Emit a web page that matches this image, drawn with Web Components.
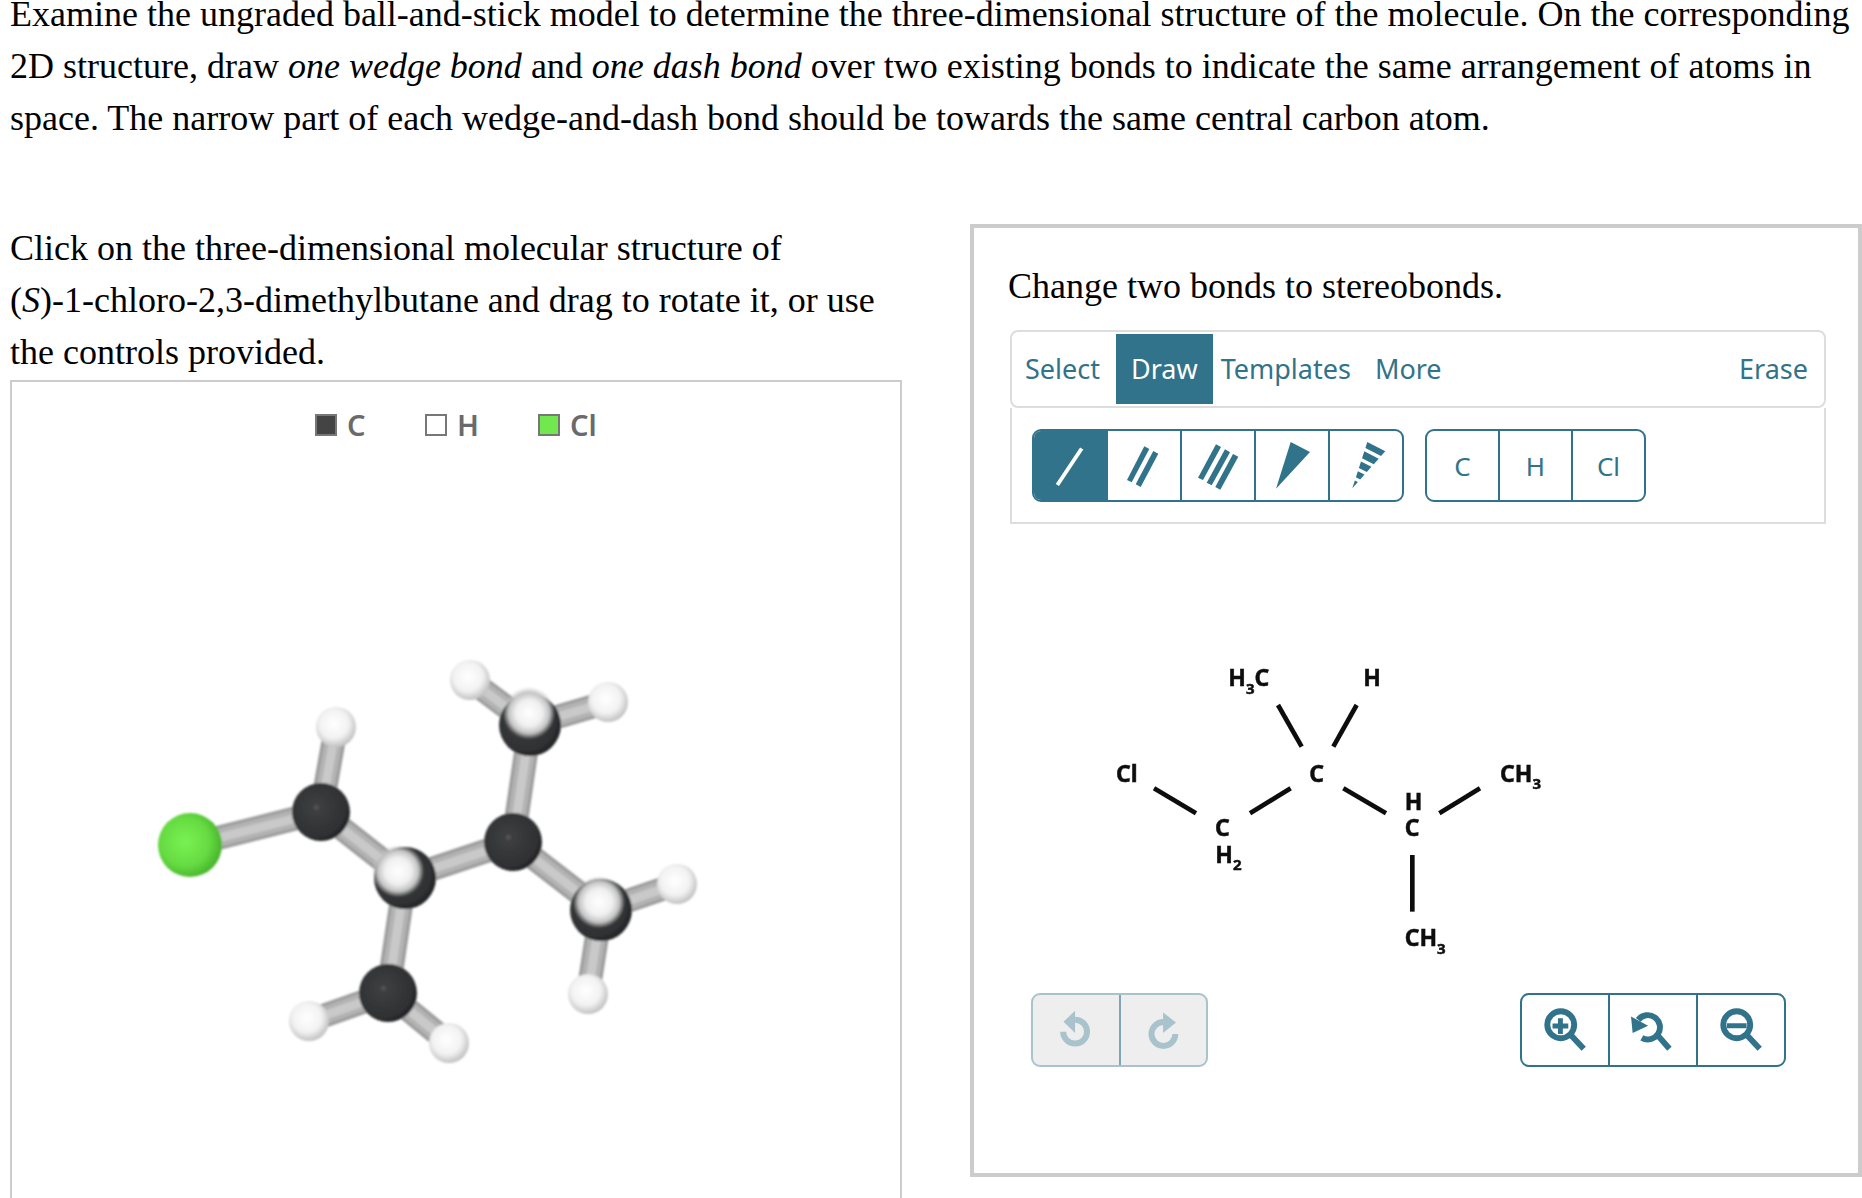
<!DOCTYPE html>
<html>
<head>
<meta charset="utf-8">
<title>Stereobonds</title>
<style>
html, body { margin: 0; height: 1198px; overflow: hidden; background: #fff; }
</style>
</head>
<body>
<quiz-page>
    <question-text slot="question">
        Examine the ungraded ball-and-stick model to determine the three-dimensional structure of the molecule. On the corresponding 2D structure, draw <i>one wedge bond</i> and <i>one dash bond</i> over two existing bonds to indicate the same arrangement of atoms in space. The narrow part of each wedge-and-dash bond should be towards the same central carbon atom.
    </question-text>
    <mol-viewer slot="left">
        Click on the three-dimensional molecular structure of<br>(<i>S</i>)-1-chloro-2,3-dimethylbutane and drag to rotate it, or use<br>the controls provided.
    </mol-viewer>
    <sketch-panel slot="right"></sketch-panel>
</quiz-page>

<script>
const TEAL = '#31738a';

class QuizPage extends HTMLElement {
    constructor() {
        super();
        this.attachShadow({ mode: 'open' });
        this.shadowRoot.innerHTML = `
            <style>
            :host {
                display: block;
                margin-top: -12px;
                padding-left: 10px;
                font-family: "Liberation Serif", "Times New Roman", serif;
                font-size: 36px;
                line-height: 52px;
                color: #000;
            }
            .cols {
                display: grid;
                grid-template-columns: 892px 892px;
                column-gap: 68px;
                margin-top: 78px;
                align-items: start;
            }
            </style>
            <slot name="question"></slot>
            <div class="cols">
                <slot name="left"></slot>
                <slot name="right"></slot>
            </div>
        `;
    }
}

class QuestionText extends HTMLElement {
    constructor() {
        super();
        this.attachShadow({ mode: 'open' });
        this.shadowRoot.innerHTML = `
            <style>
            :host { display: block; }
            </style>
            <slot></slot>
        `;
    }
}

class LegendItem extends HTMLElement {
    constructor() {
        super();
        this.attachShadow({ mode: 'open' });
        this.shadowRoot.innerHTML = `
            <style>
            :host {
                display: flex;
                align-items: center;
                gap: 10px;
                font-family: "Noto Sans", sans-serif;
                font-weight: 600;
                font-size: 29px;
                line-height: 24px;
                color: #6a6a6a;
            }
            .swatch {
                width: 22px;
                height: 22px;
                box-sizing: border-box;
                border: 2px solid #777;
                background: var(--swatch, #fff);
            }
            </style>
            <div class="swatch"></div>
            <slot></slot>
        `;
    }
}

class MolViewer extends HTMLElement {
    constructor() {
        super();
        this.attachShadow({ mode: 'open' });

        const bonds = [
            [189, 845, 320, 812], [320, 812, 335, 727], [320, 812, 404, 878],
            [404, 878, 512, 842], [404, 878, 387, 993], [512, 842, 529, 725],
            [512, 842, 600, 910], [529, 725, 469, 680], [529, 725, 607, 702],
            [600, 910, 676, 884], [600, 910, 587, 994], [387, 993, 308, 1021],
            [387, 993, 448, 1043]
        ];
        const bondLines = [[24, '#9b9b9b'], [18, '#b2b2b2'], [9, '#c9c9c9']].map(([w, c]) =>
            bonds.map(b => `<line x1="${b[0]}" y1="${b[1]}" x2="${b[2]}" y2="${b[3]}" stroke="${c}" stroke-width="${w}"/>`).join('')
        ).join('');

        const ball = (x, y, r, fill) => `<circle cx="${x}" cy="${y}" r="${r}" fill="url(#${fill})"/>`;
        const hydrogens = [[335, 727], [469, 680], [607, 702], [676, 884], [587, 994], [308, 1021], [448, 1043]]
            .map(h => ball(h[0], h[1], 20, 'hyd')).join('');
        const carbons = [[320, 812, 29], [404, 878, 31], [512, 842, 29], [529, 725, 31], [600, 910, 31], [387, 993, 29]]
            .map(c => ball(c[0], c[1], c[2], 'carb')).join('');
        const fronts = [[397, 871], [528, 713], [598, 902]].map(f => ball(f[0], f[1], 26, 'front')).join('');

        this.shadowRoot.innerHTML = `
            <style>
            :host { display: block; }
            .box {
                margin-top: 2px;
                height: 850px;
                box-sizing: border-box;
                border: 2px solid #ccc;
            }
            .legend {
                display: flex;
                padding: 28px 0 0 303px;
                height: 30px;
            }
            .legend legend-item:nth-child(1) { width: 110px; }
            .legend legend-item:nth-child(2) { width: 113px; }
            svg { display: block; }
            </style>
            <slot></slot>
            <div class="box">
                <div class="legend">
                    <legend-item style="--swatch:#444">C</legend-item>
                    <legend-item style="--swatch:#fff">H</legend-item>
                    <legend-item style="--swatch:#72e84f">Cl</legend-item>
                </div>
                <svg width="888" height="700" viewBox="11 440 888 700">
                    <defs>
                        <radialGradient id="hyd" cx="0.45" cy="0.42" r="0.6">
                            <stop offset="0" stop-color="#ffffff"/>
                            <stop offset="0.6" stop-color="#f2f2f2"/>
                            <stop offset="1" stop-color="#bdbdbd"/>
                        </radialGradient>
                        <radialGradient id="carb" cx="0.42" cy="0.42" r="0.62">
                            <stop offset="0" stop-color="#5a5c5e"/>
                            <stop offset="0.1" stop-color="#3d3f41"/>
                            <stop offset="0.8" stop-color="#2f3133"/>
                            <stop offset="1" stop-color="#1d1e20"/>
                        </radialGradient>
                        <radialGradient id="green" cx="0.42" cy="0.45" r="0.62">
                            <stop offset="0" stop-color="#79f053"/>
                            <stop offset="0.6" stop-color="#66dc42"/>
                            <stop offset="1" stop-color="#42ad28"/>
                        </radialGradient>
                        <radialGradient id="front">
                            <stop offset="0" stop-color="#ffffff"/>
                            <stop offset="0.5" stop-color="#f0f0f0"/>
                            <stop offset="0.78" stop-color="#c4c4c4"/>
                            <stop offset="1" stop-color="#c4c4c4" stop-opacity="0"/>
                        </radialGradient>
                        <filter id="soft" x="-5%" y="-5%" width="110%" height="110%">
                            <feGaussianBlur stdDeviation="0.8"/>
                        </filter>
                    </defs>
                    <g filter="url(#soft)">
                        ${bondLines}
                        ${hydrogens}
                        ${ball(189, 845, 32, 'green')}
                        ${carbons}
                        ${fronts}
                    </g>
                </svg>
            </div>
        `;
    }
}

class ToolTab extends HTMLElement {
    constructor() {
        super();
        this.attachShadow({ mode: 'open' });
        this.shadowRoot.innerHTML = `
            <style>
            :host {
                display: flex;
                align-items: center;
                height: 70px;
                box-sizing: border-box;
                padding: 0 16px;
                color: ${TEAL};
            }
            :host([active]) {
                background: ${TEAL};
                color: #fff;
            }
            </style>
            <slot></slot>
        `;
    }
}

class BtnGroup extends HTMLElement {
    constructor() {
        super();
        this.attachShadow({ mode: 'open' });
        this.shadowRoot.innerHTML = `
            <style>
            :host {
                display: flex;
                box-sizing: border-box;
                height: var(--h, 74px);
                width: var(--w, 176px);
                border: 2px solid ${TEAL};
                border-radius: 9px;
                overflow: hidden;
                background: #fff;
            }
            :host([disabled]) {
                border-color: #a9c3cd;
                background: #eee;
            }
            ::slotted(tool-btn:not(:first-child)) {
                border-left: 2px solid ${TEAL};
            }
            :host([disabled]) ::slotted(tool-btn:not(:first-child)) {
                border-left-color: #7fa5b3;
            }
            </style>
            <slot></slot>
        `;
    }
}

class ToolBtn extends HTMLElement {
    constructor() {
        super();
        this.attachShadow({ mode: 'open' });
        this.shadowRoot.innerHTML = `
            <style>
            :host {
                flex: 1;
                box-sizing: border-box;
                display: flex;
                align-items: center;
                justify-content: center;
                min-width: 0;
                font-family: "Noto Sans", sans-serif;
                font-size: 26px;
                color: ${TEAL};
            }
            :host([active]) { background: ${TEAL}; }
            </style>
            <slot></slot>
        `;
    }
}

class SkeletalFormula extends HTMLElement {
    constructor() {
        super();
        this.attachShadow({ mode: 'open' });
        const lines = [
            [222, 415, 348, 490], [510, 490, 632, 415], [790, 415, 918, 490], [1078, 490, 1200, 415],
            [594, 165, 665, 290], [830, 165, 760, 290], [997, 615, 997, 785]
        ].map(l => `<line x1="${l[0]}" y1="${l[1]}" x2="${l[2]}" y2="${l[3]}"/>`).join('');
        this.shadowRoot.innerHTML = `
            <style>
            :host { display: block; width: 500px; height: 320px; }
            svg { display: block; }
            text { font-family: "Noto Sans", sans-serif; font-weight: 700; font-size: 69px; fill: #111; stroke: #111; stroke-width: 1.5; }
            .sub { font-size: 45px; }
            line { stroke: #111; stroke-width: 14; }
            </style>
            <svg width="500" height="320" viewBox="0 0 1500 960">
                <defs>
                    <filter id="soft"><feGaussianBlur stdDeviation="1.6"/></filter>
                </defs>
                <g filter="url(#soft)">
                    ${lines}
                    <text x="108" y="396">Cl</text>
                    <text x="445" y="109">H<tspan class="sub" dy="22">3</tspan><tspan dy="-22">C</tspan></text>
                    <text x="850" y="109">H</text>
                    <text x="688" y="396">C</text>
                    <text x="1260" y="396">CH<tspan class="sub" dy="22">3</tspan></text>
                    <text x="974" y="481">H</text>
                    <text x="974" y="558">C</text>
                    <text x="405" y="558">C</text>
                    <text x="406" y="639">H<tspan class="sub" dy="22">2</tspan></text>
                    <text x="974" y="889">CH<tspan class="sub" dy="22">3</tspan></text>
                </g>
            </svg>
        `;
    }
}

class SketchPanel extends HTMLElement {
    constructor() {
        super();
        this.attachShadow({ mode: 'open' });
        this.shadowRoot.innerHTML = `
            <style>
            :host {
                display: block;
                box-sizing: border-box;
                margin-top: 2px;
                height: 953px;
                border: 4px solid #ccc;
                padding: 32px 0 0 34px;
            }
            .tabs {
                display: flex;
                align-items: center;
                box-sizing: border-box;
                width: 816px;
                height: 78px;
                margin: 18px 0 0 2px;
                border: 2px solid #ddd;
                border-radius: 8px;
                font-family: "Noto Sans", sans-serif;
                font-size: 27px;
            }
            .tools {
                display: flex;
                gap: 21px;
                box-sizing: border-box;
                width: 816px;
                height: 116px;
                margin-left: 2px;
                padding: 21px 20px 20px;
                border: 2px solid #ddd;
                border-top: 0;
            }
            svg { display: block; }
            skeletal-formula { margin: 126px 0 0 72px; }
            .actions {
                display: flex;
                justify-content: space-between;
                box-sizing: border-box;
                width: 816px;
                margin: 23px 0 0 2px;
                padding: 0 40px 0 21px;
            }
            </style>
            <div>Change two bonds to stereobonds.</div>
            <div class="tabs">
                <tool-tab style="padding:0 16px 0 13px">Select</tool-tab>
                <tool-tab active style="padding:0 15px">Draw</tool-tab>
                <tool-tab style="padding:0 8px">Templates</tool-tab>
                <tool-tab style="padding:0 8px;margin-left:8px">More</tool-tab>
                <tool-tab style="margin-left:auto;padding:0 16px">Erase</tool-tab>
            </div>
            <div class="tools">
                <btn-group style="--w:372px;--h:73px">
                    <tool-btn active>
                        <svg width="74" height="73" viewBox="0 0 74 73"><line x1="49" y1="19" x2="24" y2="56.5" stroke="#fff" stroke-width="4"/></svg>
                    </tool-btn>
                    <tool-btn>
                        <svg width="72" height="73" viewBox="0 0 72 73" fill="${TEAL}">
                            <polygon points="36.3,17.3 41.3,20 23.7,53.3 19,51"/>
                            <polygon points="45.3,22 50.3,24.7 32.7,58 27.7,55.3"/>
                        </svg>
                    </tool-btn>
                    <tool-btn>
                        <svg width="72" height="73" viewBox="0 0 72 73" fill="${TEAL}">
                            <polygon points="34,15.3 39,18 21,51 16,48.7"/>
                            <polygon points="43,20.3 48,23.3 29.7,56.3 24.7,53.7"/>
                            <polygon points="51,25 56.3,27.7 38.3,60.7 33.3,58"/>
                        </svg>
                    </tool-btn>
                    <tool-btn>
                        <svg width="72" height="73" viewBox="0 0 72 73" fill="${TEAL}">
                            <polygon points="34.7,13 54,23 20,59.7"/>
                        </svg>
                    </tool-btn>
                    <tool-btn>
                        <svg width="72" height="73" viewBox="0 0 72 73" fill="${TEAL}">
                            <polygon points="37.3,13 55.3,22.3 51,27.1 35.35,19"/>
                            <polygon points="34.3,22.3 48.7,29.7 43.75,35.25 32.05,29.2"/>
                            <polygon points="31,32.45 41.44,37.84 36.8,43 28.9,38.9"/>
                            <polygon points="27.85,42.2 34.5,45.6 30.2,50.4 25.9,48.2"/>
                            <polygon points="24.85,51.4 27.9,53 22.3,59.3"/>
                        </svg>
                    </tool-btn>
                </btn-group>
                <btn-group style="--w:221px;--h:73px">
                    <tool-btn>C</tool-btn>
                    <tool-btn>H</tool-btn>
                    <tool-btn>Cl</tool-btn>
                </btn-group>
            </div>
            <skeletal-formula></skeletal-formula>
            <div class="actions">
                <btn-group disabled style="--w:177px">
                    <tool-btn>
                        <svg width="86" height="70" viewBox="8 18 258 210" fill="none" stroke="#a9c3cd">
                            <path d="M135 92 A36 36 0 1 1 99 128" stroke-width="18"/>
                            <polygon points="135,65 100,98 135,132" fill="#a9c3cd" stroke="none"/>
                        </svg>
                    </tool-btn>
                    <tool-btn>
                        <svg width="86" height="70" viewBox="270 18 258 210" fill="none" stroke="#a9c3cd">
                            <path d="M398 99 A36 36 0 1 0 434 135" stroke-width="18"/>
                            <polygon points="397,70 436,100 397,132" fill="#a9c3cd" stroke="none"/>
                        </svg>
                    </tool-btn>
                </btn-group>
                <btn-group style="--w:266px">
                    <tool-btn>
                        <svg width="87" height="70" viewBox="10 18 262 210" fill="none" stroke="${TEAL}" stroke-width="18">
                            <circle cx="128" cy="107" r="41"/>
                            <line x1="160" y1="140" x2="198" y2="180"/>
                            <path d="M127 87 V135 M103 111 H151" stroke-width="15"/>
                        </svg>
                    </tool-btn>
                    <tool-btn>
                        <svg width="87" height="70" viewBox="276 18 262 210" fill="none" stroke="${TEAL}" stroke-width="18">
                            <path d="M362 92 A37 37 0 1 1 373 147"/>
                            <line x1="422" y1="140" x2="457" y2="180"/>
                            <polygon points="340,82 345,132 392,110" fill="${TEAL}" stroke="none"/>
                        </svg>
                    </tool-btn>
                    <tool-btn>
                        <svg width="87" height="70" viewBox="540 18 262 210" fill="none" stroke="${TEAL}" stroke-width="18">
                            <circle cx="658" cy="107" r="41"/>
                            <line x1="690" y1="140" x2="728" y2="180"/>
                            <line x1="628" y1="110" x2="688" y2="110" stroke-width="15"/>
                        </svg>
                    </tool-btn>
                </btn-group>
            </div>
        `;
    }
}

customElements.define('quiz-page', QuizPage);
customElements.define('question-text', QuestionText);
customElements.define('legend-item', LegendItem);
customElements.define('mol-viewer', MolViewer);
customElements.define('tool-tab', ToolTab);
customElements.define('btn-group', BtnGroup);
customElements.define('tool-btn', ToolBtn);
customElements.define('skeletal-formula', SkeletalFormula);
customElements.define('sketch-panel', SketchPanel);
</script>
</body>
</html>
